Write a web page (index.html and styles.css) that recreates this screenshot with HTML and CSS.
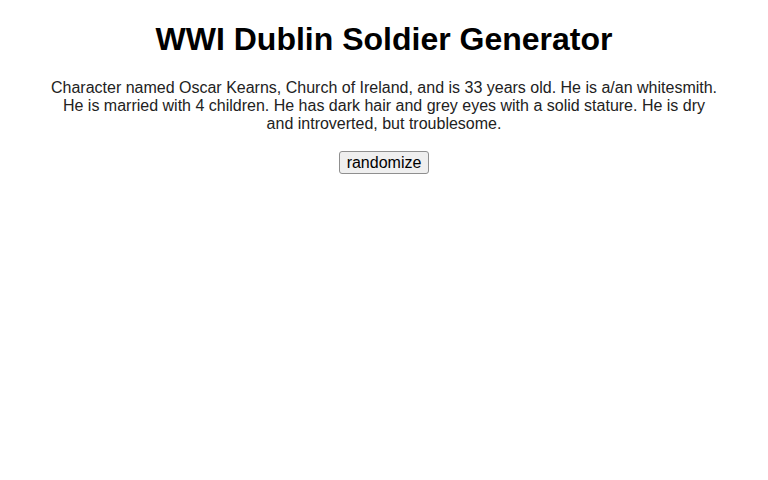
FILE: index.html
```html
<!DOCTYPE html>
<html lang="en">
<head>
<meta charset="utf-8">
<title>WWI Dublin Soldier Generator</title>
<link rel="stylesheet" href="styles.css">
</head>
<body>
<main class="app">
  <h1 class="title">WWI Dublin Soldier Generator</h1>
  <p class="bio">Character named Oscar Kearns, Church of Ireland, and is 33 years old. He is a/an whitesmith. He is married with 4 children. He has dark hair and grey eyes with a solid stature. He is dry and introverted, but troublesome.</p>
  <button class="randomize" type="button">randomize</button>
</main>
</body>
</html>
```
FILE: styles.css
```css
html, body {
  margin: 0;
  background: #fff;
}

.app {
  font-family: "Liberation Sans", Arial, sans-serif;
  text-align: center;
  max-width: 668px;
  margin: 0 auto;
}

.title {
  font-size: 32px;
  font-weight: bold;
  color: #000;
  margin: 21px 0;
  line-height: 37px;
}

.bio {
  font-size: 16px;
  line-height: 18px;
  color: #222;
  margin: 21px 0 18px;
}

.randomize {
  font-family: "Liberation Sans", Arial, sans-serif;
  font-size: 16px;
  color: #000;
  background: #efefef;
  border: 1px solid #8f8f8f;
  border-radius: 3px;
  padding: 1px 7px;
  line-height: 19px;
}
```
